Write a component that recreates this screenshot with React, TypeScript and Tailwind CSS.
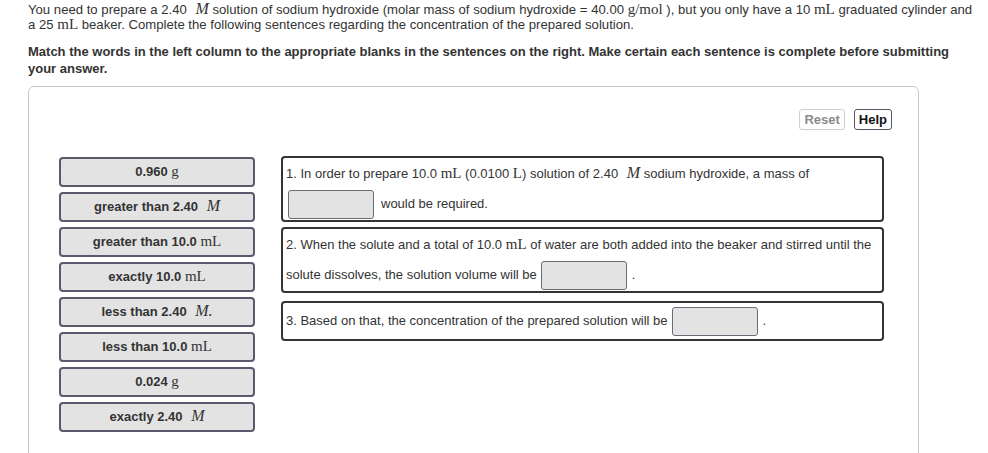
import React from 'react';

const serif = { fontFamily: '"Liberation Serif", "DejaVu Serif", serif' };

function Unit({ children }: { children: React.ReactNode }) {
  return (
    <span className="font-normal text-[15px] leading-none" style={serif}>
      {children}
    </span>
  );
}

function MathM({ dot = false }: { dot?: boolean }) {
  return (
    <span className="font-normal italic text-[16px] ml-[5px] leading-none" style={serif}>
      M{dot ? '.' : ''}
    </span>
  );
}

const items: React.ReactNode[] = [
  <>0.960 <Unit>g</Unit></>,
  <>greater than 2.40 <MathM /></>,
  <>greater than 10.0 <Unit>mL</Unit></>,
  <>exactly 10.0 <Unit>mL</Unit></>,
  <>less than 2.40 <MathM dot /></>,
  <>less than 10.0 <Unit>mL</Unit></>,
  <>0.024 <Unit>g</Unit></>,
  <>exactly 2.40 <MathM /></>,
];

function Blank() {
  return (
    <span className="inline-block align-middle w-[86px] h-[29px] bg-[#e3e3e3] border border-[#6b6b78] rounded-[3px]" />
  );
}

export default function App() {
  return (
    <div
      className="w-[988px] h-[453px] overflow-hidden bg-white text-[#333] text-[13px] pl-[28px]"
      style={{ fontFamily: '"Liberation Sans", Arial, sans-serif' }}
    >
      <p className="pt-[1px] leading-[15px] whitespace-nowrap text-[13.15px]">
        You need to prepare a 2.40 <MathM /> solution of sodium hydroxide (molar mass of sodium hydroxide = 40.00{' '}
        <Unit>g/mol</Unit> ), but you only have a 10 <Unit>mL</Unit> graduated cylinder and
        <br />
        a 25 <Unit>mL</Unit> beaker. Complete the following sentences regarding the concentration of the prepared
        solution.
      </p>
      <p className="mt-[11px] font-bold leading-[17px] w-[930px]">
        Match the words in the left column to the appropriate blanks in the sentences on the right. Make certain each
        sentence is complete before submitting your answer.
      </p>

      <div className="mt-[9px] w-[891px] h-[400px] border border-[#c8c8c8] rounded-[6px] pl-[30px] pr-[26px] pt-[22px]">
        <div className="flex justify-end gap-[9px]">
          <button className="h-[21px] px-[4px] border border-[#cfcfcf] rounded-[3px] text-[#8a8a8a] font-bold text-[13px] leading-[19px]">
            Reset
          </button>
          <button className="h-[21px] px-[4px] border border-[#556] rounded-[3px] text-[#111] font-bold text-[13px] leading-[19px]">
            Help
          </button>
        </div>

        <div className="flex gap-[26px] mt-[26px]">
          <div className="flex flex-col gap-[5px] w-[196px] pt-[1px]">
            {items.map((it, i) => (
              <div
                key={i}
                className="h-[30px] flex items-center justify-center bg-[#e3e3e3] border-2 border-[#5a5a6e] rounded-[4px] font-bold text-[13px] text-[#333]"
              >
                <span>{it}</span>
              </div>
            ))}
          </div>

          <div className="flex flex-col w-[603px] text-[13px]">
            <div className="border-2 border-[#333] rounded-[4px] px-[3px] py-[1px]">
              <div className="flex items-center h-[30px] whitespace-nowrap">
                <span>
                  1. In order to prepare 10.0 <Unit>mL</Unit> (0.0100 <Unit>L</Unit>) solution of 2.40 <MathM /> sodium
                  hydroxide, a mass of
                </span>
              </div>
              <div className="flex items-center h-[30px]">
                <span className="ml-[2px]"><Blank /></span>
                <span className="ml-[7px]">would be required.</span>
              </div>
            </div>

            <div className="mt-[5px] border-2 border-[#333] rounded-[4px] px-[3px] py-[1px]">
              <div className="flex items-center h-[30px] whitespace-nowrap">
                <span>
                  2. When the solute and a total of 10.0 <Unit>mL</Unit> of water are both added into the beaker and
                  stirred until the
                </span>
              </div>
              <div className="flex items-center h-[30px]">
                <span>solute dissolves, the solution volume will be</span>
                <span className="ml-[4px]"><Blank /></span>
                <span className="ml-[5px]">.</span>
              </div>
            </div>

            <div className="mt-[8px] border-2 border-[#333] rounded-[4px] px-[3px] py-[3px]">
              <div className="flex items-center h-[30px]">
                <span>3. Based on that, the concentration of the prepared solution will be</span>
                <span className="ml-[4px]"><Blank /></span>
                <span className="ml-[5px]">.</span>
              </div>
            </div>
          </div>
        </div>
      </div>
    </div>
  );
}
